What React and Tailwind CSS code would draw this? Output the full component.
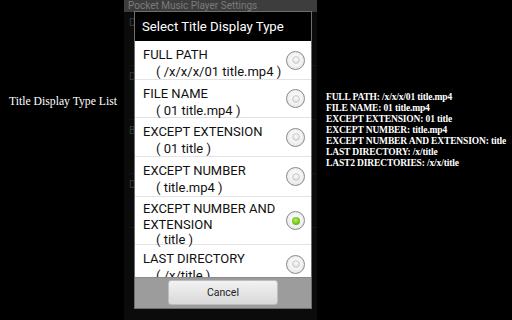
import React from "react";

const items = [
  { lines: ["FULL PATH"], sub: "( /x/x/x/01 title.mp4 )", h: "h-[39px]" },
  { lines: ["FILE NAME"], sub: "( 01 title.mp4 )", h: "h-[38px]" },
  { lines: ["EXCEPT EXTENSION"], sub: "( 01 title )", h: "h-[39px]" },
  { lines: ["EXCEPT NUMBER"], sub: "( title.mp4 )", h: "h-[40px]" },
  { lines: ["EXCEPT NUMBER AND", "EXTENSION"], sub: "( title )", h: "h-[48px]", selected: true },
  { lines: ["LAST DIRECTORY"], sub: "( /x/title )", h: "h-[39px]" },
];

const legend = [
  "FULL PATH: /x/x/x/01 title.mp4",
  "FILE NAME: 01 title.mp4",
  "EXCEPT EXTENSION: 01 title",
  "EXCEPT NUMBER: title.mp4",
  "EXCEPT NUMBER AND EXTENSION: title",
  "LAST DIRECTORY: /x/title",
  "LAST2 DIRECTORIES: /x/x/title",
];

function Radio({ selected }) {
  return (
    <div className="w-[19px] h-[19px] rounded-full border border-[#8a8a8a] bg-[radial-gradient(circle_at_50%_45%,#ffffff_0%,#f4f4f4_45%,#dcdcdc_100%)] flex items-center justify-center shrink-0">
      {selected ? (
        <div className="w-[8px] h-[8px] rounded-full bg-[radial-gradient(circle_at_45%_40%,#b6f05a_0%,#6cc219_60%,#4a9a10_100%)]" />
      ) : (
        <div className="w-[8px] h-[8px] rounded-full bg-[radial-gradient(circle_at_50%_40%,#ffffff_0%,#e2e2e2_60%,#c8c8c8_100%)] border border-[#d0d0d0]" />
      )}
    </div>
  );
}

export default function App() {
  return (
    <div className="w-[512px] h-[320px] bg-black flex overflow-hidden" style={{ fontFamily: "Roboto, 'Noto Sans', sans-serif" }}>
      <div className="w-[124px] shrink-0 pt-[95px] pl-[9px]">
        <div className="text-white text-[11.7px] leading-[13px] whitespace-nowrap" style={{ fontFamily: "'Liberation Serif', serif" }}>
          Title Display Type List
        </div>
      </div>

      <div className="w-[193px] h-[320px] shrink-0 relative bg-[#0b0b0b]">
        <div className="h-[12px] bg-[#3d3d3d] text-[#7b7b7b] text-[10px] leading-[12px] pl-[4px] whitespace-nowrap overflow-hidden">
          Pocket Music Player Settings
        </div>
        <div className="flex flex-col text-[#3a3a3a] text-[10px] pl-[5px]">
          <div className="h-[54px] pt-[3px] border-b border-[#151515]">D</div>
          <div className="h-[54px] pt-[3px] border-b border-[#151515]">D</div>
          <div className="h-[54px] pt-[3px] border-b border-[#151515]">B</div>
          <div className="h-[54px] pt-[3px] border-b border-[#151515]">D</div>
        </div>

        <div className="absolute left-[10px] top-[11px] w-[178px] h-[298px] border border-[#6e6e6e] bg-black flex flex-col overflow-hidden">
          <div className="h-[29px] shrink-0 bg-black text-white text-[13.2px] leading-[30px] pl-[7px] whitespace-nowrap">
            Select Title Display Type
          </div>
          <div className="flex-1 bg-white overflow-hidden flex flex-col">
            {items.map((it, i) => (
              <div key={i} className={`${it.h} shrink-0 flex items-center border-b border-[#e3e3e3] pl-[8px] pr-[6px]`}>
                <div
                  className={
                    it.lines.length > 1
                      ? "flex-1 min-w-0 self-start pt-[4px] text-[#111] text-[13px] leading-[15.5px] whitespace-nowrap"
                      : "flex-1 min-w-0 self-start pt-[5px] text-[#111] text-[13px] leading-[17px] whitespace-nowrap"
                  }
                >
                  {it.lines.map((l, j) => (
                    <div key={j}>{l}</div>
                  ))}
                  <div className="pl-[13px]">{it.sub}</div>
                </div>
                <Radio selected={it.selected} />
              </div>
            ))}
          </div>
          <div className="h-[31px] shrink-0 bg-[#9c9c9c] border-t border-[#8a8a8a] flex items-start pt-[2px] pl-[33px]">
            <div className="w-[110px] h-[25px] rounded-[3px] bg-[linear-gradient(#f2f2f2,#d9d9d9)] border border-[#bdbdbd] flex items-center justify-center text-[#222] text-[10.5px]">
              Cancel
            </div>
          </div>
        </div>
      </div>

      <div className="flex-1 pt-[92px] pl-[9px]">
        <div className="text-white text-[9.5px] leading-[11px] font-bold tracking-[-0.15px] whitespace-nowrap" style={{ fontFamily: "'Liberation Serif', serif" }}>
          {legend.map((l, i) => (
            <div key={i}>{l}</div>
          ))}
        </div>
      </div>
    </div>
  );
}
